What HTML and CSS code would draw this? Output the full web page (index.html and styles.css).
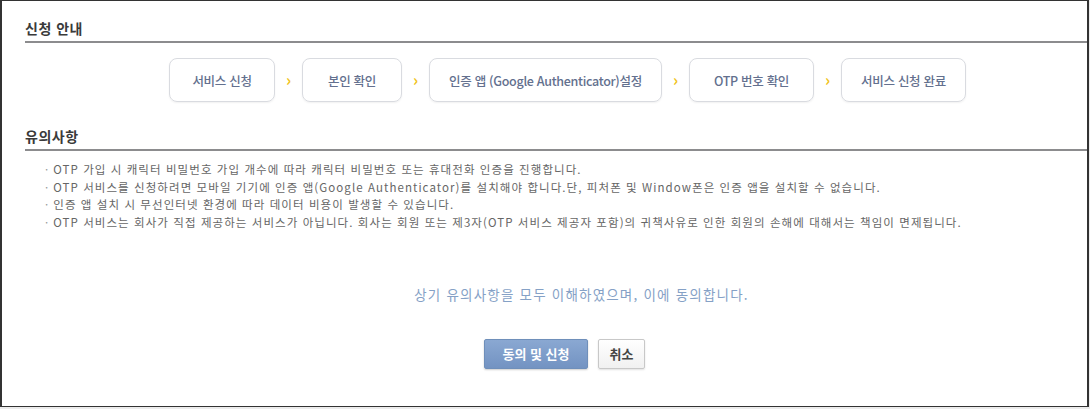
FILE: index.html
```html
<!DOCTYPE html>
<html lang="ko">
<head>
<meta charset="utf-8">
<title>OTP 신청 안내</title>
<link rel="stylesheet" href="styles.css">
</head>
<body>
<div class="frame">
  <section class="section">
    <h2 class="section-title">신청 안내</h2>
  </section>
  <div class="steps">
    <div class="step s1">서비스 신청</div>
    <span class="arrow">›</span>
    <div class="step s2">본인 확인</div>
    <span class="arrow">›</span>
    <div class="step s3">인증 앱 (Google Authenticator)설정</div>
    <span class="arrow">›</span>
    <div class="step s4">OTP 번호 확인</div>
    <span class="arrow">›</span>
    <div class="step s5">서비스 신청 완료</div>
  </div>
  <section class="section">
    <h2 class="section-title">유의사항</h2>
  </section>
  <ul class="notes">
    <li>OTP 가입 시 캐릭터 비밀번호 가입 개수에 따라 캐릭터 비밀번호 또는 휴대전화 인증을 진행합니다.</li>
    <li>OTP 서비스를 신청하려면 모바일 기기에 인증 앱(Google Authenticator)를 설치해야 합니다.단, 피처폰 및 Window폰은 인증 앱을 설치할 수 없습니다.</li>
    <li>인증 앱 설치 시 무선인터넷 환경에 따라 데이터 비용이 발생할 수 있습니다.</li>
    <li>OTP 서비스는 회사가 직접 제공하는 서비스가 아닙니다. 회사는 회원 또는 제3자(OTP 서비스 제공자 포함)의 귀책사유로 인한 회원의 손해에 대해서는 책임이 면제됩니다.</li>
  </ul>
  <p class="agree">상기 유의사항을 모두 이해하였으며, 이에 동의합니다.</p>
  <div class="buttons">
    <button class="btn btn-primary">동의 및 신청</button>
    <button class="btn btn-cancel">취소</button>
  </div>
</div>
</body>
</html>
```

FILE: styles.css
```css
html, body {
  margin: 0;
  padding: 0;
}
body {
  background: #ececec;
  width: 1090px;
  height: 409px;
  overflow: hidden;
  font-family: "Noto Sans CJK KR", "Noto Sans", sans-serif;
}
.frame {
  box-sizing: border-box;
  width: 1089px;
  height: 407px;
  background: #fff;
  border: 1px solid #333;
  border-left-width: 2px;
  border-right-width: 2px;
  padding-top: 17px;
}
.section {
  margin-left: 23px;
  border-bottom: 2px solid #8c8c8e;
}
.section-title {
  margin: 0;
  font-size: 14px;
  font-weight: bold;
  color: #3a3a3a;
  line-height: 20px;
  padding-bottom: 3px;
  letter-spacing: 0.5px;
}
.steps {
  display: flex;
  align-items: center;
  padding-left: 167px;
  margin-top: 15px;
  margin-bottom: 24px;
}
.step {
  box-sizing: border-box;
  height: 44px;
  border: 1px solid #d9dbe0;
  border-radius: 8px;
  box-shadow: 0 1px 2px rgba(0,0,0,0.06);
  display: flex;
  align-items: center;
  justify-content: center;
  color: #63708e;
  font-size: 12.5px;
  font-weight: 500;
  letter-spacing: -0.3px;
}
.s1 { width: 106px; }
.s2 { width: 100px; }
.s3 { width: 233px; }
.s4 { width: 125px; }
.s5 { width: 125px; }
.arrow {
  width: 27px;
  text-align: center;
  color: #f0c21a;
  font-weight: bold;
  font-size: 16px;
  line-height: 16px;
  padding-bottom: 3px;
}
.notes {
  list-style: none;
  margin: 10px 0 0 0;
  padding: 0 0 0 43px;
  font-size: 11.5px;
  color: #666;
  line-height: 17.7px;
  letter-spacing: 1.07px;
}
.notes li::before {
  content: "·";
  color: #999;
  margin-right: 4px;
}
.agree {
  margin: 53px 0 0 0;
  padding-left: 74px;
  text-align: center;
  color: #85a1c6;
  font-size: 13.5px;
  letter-spacing: 1.2px;
  line-height: 18px;
}
.buttons {
  display: flex;
  justify-content: center;
  gap: 10px;
  padding-left: 40px;
  margin-top: 36px;
}
.btn {
  font-family: "Noto Sans CJK KR", "Noto Sans", sans-serif;
  height: 30px;
  font-size: 13px;
  font-weight: bold;
  padding: 0;
  border-radius: 2px;
  cursor: pointer;
}
.btn-primary {
  width: 104px;
  background: linear-gradient(#8aa8d2, #7393c2);
  border: 1px solid #6f8fba;
  color: #fff;
  box-shadow: 0 1px 2px rgba(0,0,0,0.2);
}
.btn-cancel {
  width: 47px;
  background: linear-gradient(#fff, #f1f1f1);
  border: 1px solid #c8c8c8;
  color: #444;
  box-shadow: 0 1px 2px rgba(0,0,0,0.12);
}
```
